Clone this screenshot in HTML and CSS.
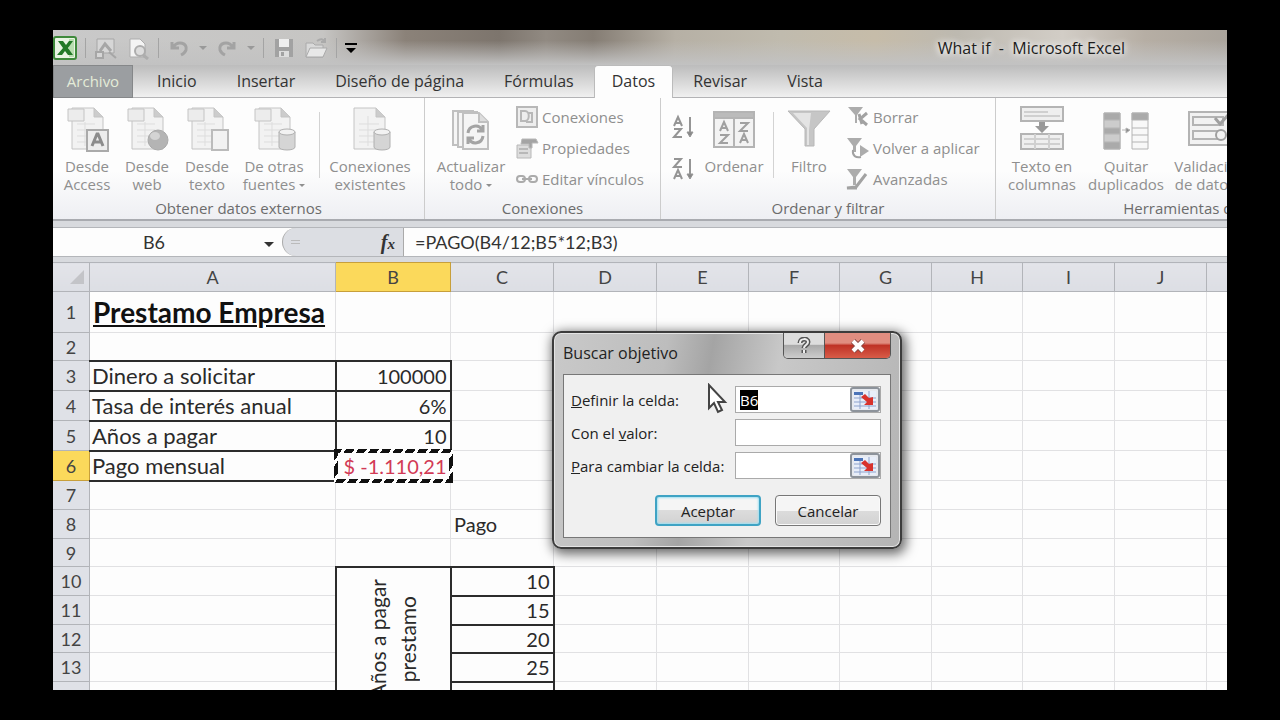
FILE: index.html
```
<!DOCTYPE html>
<html lang="es">
<head>
    <meta charset="utf-8">
    <title>What if - Microsoft Excel</title>
    <link rel="stylesheet" href="styles.css">
</head>
<body>
    <div class="excel">
        <header class="titlebar">
            <div class="quick">
                <svg class="logo" width="24" height="24" viewBox="0 0 24 24"><rect x="1" y="1" width="22" height="22" rx="2" fill="#e9f5e4" stroke="#3f8a3c" stroke-width="2"/><path d="M16 3h5v18h-5z" fill="#b9deb0"/><path d="M5 5h5l3 4 3-4h4l-5 7 5 7h-5l-3-4-3 4H4l6-7z" fill="#237a28"/></svg>
                <i class="bar"></i>
                <button title="Guardar imagen"><svg width="24" height="24" viewBox="0 0 24 24" fill="#d6d6d6" stroke="#a6a6a6"><path d="M3 3h17v14H3z"/><path d="M6 15l5-7 6 7" fill="none" stroke-width="3"/><path d="M2 16h7v6H2zM15 16l7 6" stroke-width="2"/></svg></button>
                <button title="Vista preliminar"><svg width="24" height="24" viewBox="0 0 24 24" fill="#f4f4f4" stroke="#adadad"><path d="M4 3h10l5 5v13H4z"/><circle cx="14" cy="15" r="5" fill="#ddd" stroke-width="2"/><path d="M17 19l5 4" stroke-width="3"/></svg></button>
                <i class="bar"></i>
                <button title="Deshacer"><svg width="24" height="24" viewBox="0 0 24 24" fill="none" stroke="#a3a3a3" stroke-width="3"><path d="M5 6v6h7M6 11c5-7 15-4 13 3-1 3-3 4-5 5"/></svg></button>
                <span class="caret"></span>
                <button title="Rehacer"><svg width="24" height="24" viewBox="0 0 24 24" fill="none" stroke="#a3a3a3" stroke-width="3"><path d="M19 6v6h-7M18 11C13 4 3 7 5 14c1 3 3 4 5 5"/></svg></button>
                <span class="caret"></span>
                <i class="bar"></i>
                <button title="Guardar"><svg width="24" height="24" viewBox="0 0 24 24" fill="#a2a2a2"><path d="M3 3h18v18H3z"/><path d="M7 3h10v8H7z" fill="#eee"/><path d="M7 15h10v6H7z" fill="#ddd"/><path d="M9 16h3v4H9z"/></svg></button>
                <button title="Abrir"><svg width="24" height="24" viewBox="0 0 24 24" fill="#d9d9d9" stroke="#aaa"><path d="M2 7h7l2 2h8v12H2z"/><path d="M6 12h17l-4 9H2z" fill="#e8e8e8"/><path d="M13 5c4-3 6-2 8 1m0-4v4h-4" fill="none" stroke-width="2"/></svg></button>
                <i class="bar"></i>
                <button class="more" title="Personalizar"><svg width="12" height="12" viewBox="0 0 12 12"><path d="M0 1h12v2H0zM1 6h10l-5 5z"/></svg></button>
            </div>
            <h1>What if &nbsp;- &nbsp;Microsoft Excel</h1>
        </header>

        <nav class="tabs">
            <a href="#" class="file">Archivo</a>
            <a href="#">Inicio</a>
            <a href="#">Insertar</a>
            <a href="#">Diseño de página</a>
            <a href="#">Fórmulas</a>
            <a href="#" class="active">Datos</a>
            <a href="#">Revisar</a>
            <a href="#">Vista</a>
        </nav>

        <!-- cinta de opciones -->
        <div class="ribbon">
            <section class="group g-get">
                <div class="tools">
                    <button class="big"><svg width="48" height="48" viewBox="0 0 48 48" fill="#f2f2f2" stroke="#c4c4c4"><path d="M9 4h22l9 9v32H9z"/><path d="M31 4v9h9" fill="#ccc"/><path d="M5 5h16v12H5z" fill="#ececec"/><path d="M14 20h18M14 26h18M14 32h18M14 38h18M22 18v24" stroke="#ddd"/><path d="M24 26h21v21H24z" fill="#ededed" stroke="#aaa" stroke-width="2"/><path d="M29 42l5-12h1l5 12M31 38h7" fill="none" stroke="#8c8c8c" stroke-width="3"/></svg>Desde<br>Access</button>
                    <button class="big"><svg width="48" height="48" viewBox="0 0 48 48" fill="#f2f2f2" stroke="#c4c4c4"><path d="M9 4h22l9 9v32H9z"/><path d="M31 4v9h9" fill="#ccc"/><path d="M5 5h16v12H5z" fill="#ececec"/><path d="M14 20h18M14 26h18M14 32h18M14 38h18M22 18v24" stroke="#ddd"/><circle cx="35" cy="36" r="10" fill="#b4b4b4" stroke="#aaa"/><ellipse cx="32" cy="32" rx="5" ry="4" fill="#d4d4d4" stroke="none"/></svg>Desde<br>web</button>
                    <button class="big"><svg width="48" height="48" viewBox="0 0 48 48" fill="#f2f2f2" stroke="#c4c4c4"><path d="M9 4h22l9 9v32H9z"/><path d="M31 4v9h9" fill="#ccc"/><path d="M5 5h16v12H5z" fill="#ececec"/><path d="M14 20h18M14 26h18M14 32h18M14 38h18M22 18v24" stroke="#ddd"/><path d="M29 26h16v20H29z" stroke="#bbb" stroke-width="2"/></svg>Desde<br>texto</button>
                    <button class="big wide"><svg width="48" height="48" viewBox="0 0 48 48" fill="#f2f2f2" stroke="#c4c4c4"><path d="M9 4h22l9 9v32H9z"/><path d="M31 4v9h9" fill="#ccc"/><path d="M5 5h16v12H5z" fill="#ececec"/><path d="M14 20h18M14 26h18M14 32h18M14 38h18M22 18v24" stroke="#ddd"/><path d="M29 28v15c0 4 16 4 16 0V28" fill="#d5d5d5" stroke="#b0b0b0"/><ellipse cx="37" cy="28" rx="8" ry="3" stroke="#b0b0b0"/></svg>De otras<br>fuentes <span class="caret"></span></button>
                    <i class="split"></i>
                    <button class="big wider"><svg width="48" height="48" viewBox="0 0 48 48" fill="#f2f2f2" stroke="#c4c4c4"><path d="M8 4h22l9 9v32H8z"/><path d="M30 4v9h9" fill="#ccc"/><path d="M13 20h20M13 26h20M13 32h20M13 38h20M22 12v30" stroke="#ddd"/><path d="M28 28v15c0 4 16 4 16 0V28" fill="#d5d5d5" stroke="#b0b0b0"/><ellipse cx="36" cy="28" rx="8" ry="3" stroke="#b0b0b0"/></svg>Conexiones<br>existentes</button>
                </div>
                <h2>Obtener datos externos</h2>
            </section>

            <section class="group g-conn">
                <div class="tools">
                    <button class="big wider"><svg width="48" height="48" viewBox="0 0 48 48" fill="#f5f5f5" stroke="#c0c0c0" stroke-width="2"><path d="M6 7h20v34H6z"/><path d="M11 8h19v35H11z"/><path d="M16 9h16l9 9v27H16z"/><path d="M32 9v9h9" fill="#ddd"/><path d="M21 29c1-8 11-9 14-3m1-5v6h-6M36 32c-1 8-11 9-14 3m-1 5v-6h6" fill="none" stroke="#a4a4a4" stroke-width="3"/></svg>Actualizar<br>todo <span class="caret"></span></button>
                    <div class="list">
                        <button><svg width="24" height="24" viewBox="0 0 24 24" fill="#eee" stroke="#b8b8b8" stroke-width="2"><path d="M2 2h20v20H2z"/><path d="M6 6h4c5 0 5 10 0 10H6zM13 8h4v9h-6" fill="none"/></svg>Conexiones</button>
                        <button><svg width="24" height="24" viewBox="0 0 24 24" fill="#ddd" stroke="#b8b8b8"><path d="M2 9h14v13H2z"/><path d="M7 3h14l2 4h-6v5h-3V8H6z" fill="#a4a4a4"/><path d="M4 13h9M4 17h9" stroke-width="2"/></svg>Propiedades</button>
                        <button><svg width="24" height="24" viewBox="0 0 24 24" fill="none" stroke="#ababab" stroke-width="2"><rect x="2" y="9" width="8" height="6" rx="3"/><rect x="14" y="9" width="8" height="6" rx="3"/><path d="M7 12h10"/></svg>Editar vínculos</button>
                    </div>
                </div>
                <h2>Conexiones</h2>
            </section>

            <section class="group g-sort">
                <div class="tools">
                    <div class="sorts">
                        <button title="Ordenar de A a Z"><svg width="24" height="26" viewBox="0 0 24 26" fill="none" stroke="#959595" stroke-width="2"><path d="M3 12l4-9 4 9M4 9h6M3 15h7l-7 8h8M19 3v17"/><path d="M16 18h6l-3 5z" fill="#888" stroke-width="1"/></svg></button>
                        <button title="Ordenar de Z a A"><svg width="24" height="26" viewBox="0 0 24 26" fill="none" stroke="#959595" stroke-width="2"><path d="M3 3h7l-7 8h8M3 23l4-9 4 9M4 20h6M19 3v17"/><path d="M16 18h6l-3 5z" fill="#888" stroke-width="1"/></svg></button>
                    </div>
                    <button class="big sort"><svg width="48" height="48" viewBox="0 0 48 48" fill="#f3f3f3" stroke="#b4b4b4" stroke-width="2"><path d="M4 8h40v35H4z"/><path d="M4 8h40v6H4z" fill="#bbb"/><path d="M24 14v29"/><path d="M10 27l4-9 4 9M11 24h6M10 31h8l-8 8h8M30 19h8l-8 8h8M30 39l4-9 4 9M31 36h6" fill="none" stroke="#a0a0a0"/></svg>Ordenar</button>
                    <i class="split"></i>
                    <button class="big filter"><svg width="48" height="48" viewBox="0 0 48 48"><path d="M3 7h42L29 25v17h-9V25z" fill="#c6c6c6" stroke="#b8b8b8"/><path d="M8 9h18l-2 17v15h-2V24z" fill="#e4e4e4"/></svg>Filtro</button>
                    <div class="list">
                        <button><svg width="24" height="24" viewBox="0 0 24 24" fill="#acacac"><path d="M2 2h15l-6 8v8H9v-8z"/><path d="M21 8l-7 6 7 6M13 9l3 10" fill="none" stroke="#a2a2a2" stroke-width="3"/></svg>Borrar</button>
                        <button><svg width="24" height="24" viewBox="0 0 24 24" fill="#acacac"><path d="M1 2h15l-6 8v6H7v-6z"/><path d="M7 14c-1 6 3 8 8 7" fill="none" stroke="#a2a2a2" stroke-width="2"/><path d="M14 9l9 6-9 6z"/></svg>Volver a aplicar</button>
                        <button><svg width="24" height="24" viewBox="0 0 24 24" fill="#acacac"><path d="M1 2h15l-6 8v8H7v-8z"/><path d="M20 7L10 20l-9 1h10" fill="none" stroke="#a2a2a2" stroke-width="3"/></svg>Avanzadas</button>
                    </div>
                </div>
                <h2>Ordenar y filtrar</h2>
            </section>

            <section class="group g-data">
                <div class="tools">
                    <button class="big wider"><svg width="48" height="48" viewBox="0 0 48 48" fill="#efefef" stroke="#b4b4b4" stroke-width="2"><path d="M3 3h42v14H3zM3 30h42v15H3z"/><path d="M6 8h24M6 12h36M17 30v15M31 30v15M6 35h36M6 40h36" stroke="#d0d0d0"/><path d="M21 18h6v4h4l-7 7-7-7h4z" fill="#999" stroke="none"/></svg>Texto en<br>columnas</button>
                    <button class="big wider"><svg width="48" height="48" viewBox="0 0 48 48" fill="#f8f8f8" stroke="#b4b4b4"><path d="M2 9h16v36H2zM30 9h16v36H30z"/><path d="M2 9h16v7H2zM2 24h16v6H2zM2 38h16v7H2zM30 9h16v7H30z" fill="#aaa"/><path d="M2 16h16v8H2zM2 30h16v8H2z" fill="#ccc"/><path d="M30 24h16M30 31h16M30 38h16M20 26h5"/><path d="M24 24l4 2-4 3z" fill="#888"/></svg>Quitar<br>duplicados</button>
                    <button class="big wider"><svg width="48" height="48" viewBox="0 0 48 48" fill="#f2f2f2" stroke="#b4b4b4" stroke-width="2"><path d="M3 8h44v33H3z"/><path d="M7 13h30v8H7zM7 27h30v8H7z"/><path d="M29 14l5 6 9-10" fill="none" stroke="#a0a0a0" stroke-width="3"/><circle cx="35" cy="31" r="5" stroke="#a0a0a0"/></svg>Validación<br>de datos <span class="caret"></span></button>
                </div>
                <h2>Herramientas de datos</h2>
            </section>
        </div>

        <div class="formulabar">
            <div class="namebox">
                <input type="text" value="B6" aria-label="Cuadro de nombres">
                <button title="Nombres"><span class="caret"></span></button>
            </div>
            <div class="fxbox">
                <span class="grip"></span>
                <button class="fx" title="Insertar función">f<small>x</small></button>
            </div>
            <input class="formula" type="text" value="=PAGO(B4/12;B5*12;B3)" aria-label="Barra de fórmulas">
        </div>

        <table class="sheet">
            <colgroup>
                <col class="c-num"><col class="c-a"><col class="c-b"><col class="c-c"><col class="c-c">
                <col class="c-e"><col class="c-f"><col class="c-e"><col class="c-f"><col class="c-e"><col class="c-e"><col class="c-e">
            </colgroup>
            <thead>
                <tr>
                    <th class="corner"><svg width="16" height="16" viewBox="0 0 16 16"><path d="M15 1v14H1z" fill="#c3c4c8"/></svg></th>
                    <th>A</th><th class="sel">B</th><th>C</th><th>D</th><th>E</th><th>F</th><th>G</th><th>H</th><th>I</th><th>J</th><th></th>
                </tr>
            </thead>
            <tbody>
                <tr class="tall"><th>1</th><td class="title">Prestamo Empresa</td><td></td><td></td><td></td><td></td><td></td><td></td><td></td><td></td><td></td><td></td></tr>
                <tr class="short"><th>2</th><td></td><td></td><td></td><td></td><td></td><td></td><td></td><td></td><td></td><td></td><td></td></tr>
                <tr class="data"><th>3</th><td class="box name">Dinero a solicitar</td><td class="box num">100000</td><td></td><td></td><td></td><td></td><td></td><td></td><td></td><td></td><td></td></tr>
                <tr class="data"><th>4</th><td class="box name">Tasa de interés anual</td><td class="box num">6%</td><td></td><td></td><td></td><td></td><td></td><td></td><td></td><td></td><td></td></tr>
                <tr class="data"><th>5</th><td class="box name">Años a pagar</td><td class="box num">10</td><td></td><td></td><td></td><td></td><td></td><td></td><td></td><td></td><td></td></tr>
                <tr class="data"><th class="sel">6</th><td class="box name">Pago mensual</td><td class="box num current"><span class="marquee"></span><span class="value">$ -1.110,21</span></td><td></td><td></td><td></td><td></td><td></td><td></td><td></td><td></td><td></td></tr>
                <tr><th>7</th><td></td><td></td><td></td><td></td><td></td><td></td><td></td><td></td><td></td><td></td><td></td></tr>
                <tr><th>8</th><td></td><td></td><td>Pago</td><td></td><td></td><td></td><td></td><td></td><td></td><td></td><td></td></tr>
                <tr class="short"><th>9</th><td></td><td></td><td></td><td></td><td></td><td></td><td></td><td></td><td></td><td></td><td></td></tr>
                <tr><th>10</th><td></td><td class="box turned" rowspan="5"><span>Años a pagar<br>prestamo</span></td><td class="box num">10</td><td></td><td></td><td></td><td></td><td></td><td></td><td></td><td></td></tr>
                <tr><th>11</th><td></td><td class="box num">15</td><td></td><td></td><td></td><td></td><td></td><td></td><td></td><td></td></tr>
                <tr class="short"><th>12</th><td></td><td class="box num">20</td><td></td><td></td><td></td><td></td><td></td><td></td><td></td><td></td></tr>
                <tr><th>13</th><td></td><td class="box num">25</td><td></td><td></td><td></td><td></td><td></td><td></td><td></td><td></td></tr>
                <tr><th>14</th><td></td><td class="box num">30</td><td></td><td></td><td></td><td></td><td></td><td></td><td></td><td></td></tr>
            </tbody>
        </table>

        <form class="dialog">
            <div class="caption">
                <h3>Buscar objetivo</h3>
                <div class="winbtns">
                    <button type="button" class="help" title="Ayuda"><svg width="16" height="18" viewBox="0 0 16 18" fill="none"><path d="M4 6c0-5 8-5 8-1 0 3-4 3-4 6M8 13v3" stroke="#555" stroke-width="5"/><path d="M4 6c0-5 8-5 8-1 0 3-4 3-4 6M8 13v3" stroke="#eee" stroke-width="2"/></svg></button>
                    <button type="button" class="close" title="Cerrar"><svg width="16" height="14" viewBox="0 0 16 14"><path d="M3 2l10 10M13 2L3 12" stroke="#8a4a44" stroke-width="6"/><path d="M3 2l10 10M13 2L3 12" stroke="#fff" stroke-width="4"/></svg></button>
                </div>
            </div>
            <div class="panel">
                <div class="row">
                    <label for="celda"><u>D</u>efinir la celda:</label>
                    <div class="field">
                        <input type="text" id="celda" value="B6">
                        <button type="button" title="Contraer"><svg width="22" height="18" viewBox="0 0 22 18"><path d="M0 0h22v18H0z" fill="#e8eefa"/><path d="M0 1h9v3H0z" fill="#4b74b8"/><path d="M0 7h22M0 11h22M0 15h22M6 4v14M15 0v18" stroke="#8ea3cc"/><path d="M7 6l4-3 4 4 4-1v8h-9l3-3z" fill="#d8322c"/></svg></button>
                    </div>
                </div>
                <div class="row">
                    <label for="valor">Con el <u>v</u>alor:</label>
                    <div class="field"><input type="text" id="valor"></div>
                </div>
                <div class="row">
                    <label for="cambiar"><u>P</u>ara cambiar la celda:</label>
                    <div class="field">
                        <input type="text" id="cambiar">
                        <button type="button" title="Contraer"><svg width="22" height="18" viewBox="0 0 22 18"><path d="M0 0h22v18H0z" fill="#e8eefa"/><path d="M0 1h9v3H0z" fill="#4b74b8"/><path d="M0 7h22M0 11h22M0 15h22M6 4v14M15 0v18" stroke="#8ea3cc"/><path d="M7 6l4-3 4 4 4-1v8h-9l3-3z" fill="#d8322c"/></svg></button>
                    </div>
                </div>
                <div class="actions">
                    <button type="button" class="ok">Aceptar</button>
                    <button type="button">Cancelar</button>
                </div>
            </div>
        </form>

        <svg class="pointer" width="22" height="32" viewBox="0 0 22 32"><path d="M2 2v23l5-5 4 9 4-2-4-8h7z" fill="#fff" stroke="#444" stroke-width="2"/></svg>
    </div>

    <script>
        // la celda objetivo aparece seleccionada al abrir el cuadro
        document.getElementById('celda').select();
    </script>
</body>
</html>
```
FILE: styles.css
```
* { box-sizing: border-box; }
body {
    margin: 0;
    padding: 30px 53px;
    height: 100vh;
    background: #000;
    font-family: "Open Sans", "Noto Sans", sans-serif;
    font-size: 15px;
    color: #444;
}
button { padding: 0; border: 0; background: none; font: inherit; color: inherit; }
input { font: inherit; color: inherit; outline: none; }
h1, h2, h3 { margin: 0; font-weight: normal; }
svg { display: block; }
.excel {
    position: relative;
    display: flex;
    flex-direction: column;
    height: 100%;
    overflow: hidden;
    background: #d8dade;
}
.excel > * { flex-shrink: 0; }
.caret {
    display: inline-block;
    border: 4px solid transparent;
    border-top-color: currentColor;
    border-bottom: 0;
    vertical-align: middle;
}

/* barra de título */
.titlebar {
    display: flex;
    align-items: center;
    justify-content: space-between;
    height: 35px;
    padding-right: 102px;
    background:
        linear-gradient(rgba(190,190,190,0) 30%, #c2c2c2),
        linear-gradient(90deg, #c9c9c9 0, #c6c5c3 23%, #8b8279 30%, #7d756d 38%, #918a82 42%, #857d74 46%, #b6b0a5 53%, #c0bbae 62%, #c6bca9 70%, #bdb9b0 77%, #d2cdc6 86%, #b6aea4 93%, #aaa49c 100%);
}
.quick { display: flex; align-items: center; gap: 8px; color: #999; }
.quick .bar { width: 1px; height: 20px; background: #a4a4a4; }
.quick .more { color: #000; }
.titlebar h1 {
    font-size: 16px;
    color: #1c1c1c;
    text-shadow: 0 0 6px #fff, 0 0 10px #fff;
}

/* pestañas */
.tabs {
    display: flex;
    height: 33px;
    background: linear-gradient(#bcbcbc, #f0f0f0);
    border-bottom: 1px solid #b3b3b5;
    font-size: 16px;
}
.tabs a {
    height: 33px;
    padding: 0 20px;
    line-height: 33px;
    color: #333;
    text-decoration: none;
}
.tabs .file {
    width: 80px;
    margin-right: 4px;
    padding: 0;
    background: #9b9ea1;
    border: 1px solid #858789;
    color: #e4ecd8;
    font-size: 15px;
    line-height: 31px;
    text-align: center;
}
.tabs .active {
    padding: 0 17px;
    background: #fdfdfd;
    border: 1px solid #bbb;
    border-bottom: 0;
    border-radius: 4px 4px 0 0;
    line-height: 31px;
}

/* cinta */
.ribbon {
    display: flex;
    height: 123px;
    background: linear-gradient(#fdfdfd 60%, #eeeff3);
    border-bottom: 2px solid #a9abb0;
    color: #8f8f8f;
}
.group {
    display: flex;
    flex-direction: column;
    flex-shrink: 0;
    justify-content: space-between;
    border-right: 1px solid #ccc;
}
.g-get { width: 372px; }
.g-conn { width: 236px; }
.g-sort { width: 335px; }
.g-data { width: 416px; }
.tools { display: flex; padding: 6px 4px 0; }
.group h2 {
    font-size: 15px;
    line-height: 22px;
    text-align: center;
    color: #6c6c6c;
}
.big {
    display: block;
    width: 60px;
    line-height: 18px;
    white-space: nowrap;
    align-self: flex-start;
}
.big svg { margin: 0 auto 5px; }
.big .caret { border-width: 3px 3px 0; }
.big.wide { width: 74px; }
.big.sort { width: 78px; }
.big.filter { width: 70px; }
.big.wider { width: 84px; }
.split { width: 1px; height: 66px; margin: 8px 8px 0; background: #d3d3d3; }
.g-sort .split { margin: 8px 0 0; }
.list { display: flex; flex-direction: column; gap: 7px; padding: 1px 0 0 2px; }
.list button { display: flex; align-items: center; gap: 3px; height: 24px; white-space: nowrap; }
.sorts { display: flex; flex-direction: column; gap: 16px; padding: 10px 0 0 6px; }

/* barra de fórmulas */
.formulabar {
    display: flex;
    height: 30px;
    margin: 6px 0;
    background: #fdfdfd;
    border: solid #b4b6ba;
    border-width: 1px 0;
    font-family: Lato, sans-serif;
    font-size: 18px;
    color: #333;
}
.formulabar input { border: 0; background: none; padding: 0; }
.namebox { display: flex; width: 229px; }
.namebox input { flex: 1; min-width: 0; text-align: center; }
.namebox button { width: 27px; }
.namebox .caret { border-width: 5px 5px 0; }
.fxbox {
    display: flex;
    align-items: center;
    justify-content: space-between;
    width: 122px;
    padding: 0 8px;
    background: #dcdee3;
    border: 1px solid #aaa;
    border-width: 0 1px;
    border-radius: 14px 0 0 14px;
}
.grip { width: 9px; height: 4px; border: solid #bbb; border-width: 1px 0; }
.fx { font: italic bold 20px "Liberation Serif", serif; }
.fx small { font-size: 15px; }
.formulabar .formula { flex: 1; padding-left: 11px; }

/* hoja */
.sheet {
    table-layout: fixed;
    width: 1244px;
    margin: -1px 0 0 -1px;
    border-collapse: collapse;
    background: #fdfdfd;
    font-family: Lato, sans-serif;
    font-size: 20px;
    color: #2a2a2a;
}
.c-num { width: 37px; }
.c-a { width: 246px; }
.c-b { width: 115px; }
.c-c { width: 103px; }
.c-e { width: 92px; }
.c-f { width: 91px; }
.sheet tr { height: 29px; }
.sheet .short { height: 28px; }
.sheet .data { height: 30px; }
.sheet .tall { height: 41px; }
.sheet th {
    padding: 0;
    background: #dfe1e7;
    border: 1px solid #b2b4b9;
    font-size: 18px;
    font-weight: normal;
    line-height: 22px;
    color: #444;
}
.sheet thead th { background: linear-gradient(#e3e4e9, #dcdee4); }
.sheet th.sel, .sheet thead th.sel { background: #fbd95b; border-color: #c79f3b; }
.corner svg { margin: 0 4px 0 auto; }
.sheet td {
    padding: 0 3px;
    border: 1px solid #e1e1e3;
    line-height: 24px;
    white-space: nowrap;
}
.sheet .box { border: 2px solid #2c2c2c; }
.sheet .name { padding-left: 2px; border-left-width: 1px; font-size: 22px; }
.sheet .num { text-align: right; }
.sheet .title { font-size: 28px; font-weight: bold; text-decoration: underline; color: #111; }
.current { position: relative; color: #d23a55; }
.value { position: relative; }
.marquee {
    position: absolute;
    inset: -3px;
    border: 4px solid transparent;
    background:
        linear-gradient(#fdfdfd, #fdfdfd) padding-box,
        repeating-linear-gradient(-55deg, #111 0 7px, #fff 7px 10px) border-box;
}
.turned { text-align: center; font-size: 21px; }
.turned span {
    display: inline-block;
    writing-mode: vertical-rl;
    transform: rotate(180deg);
    line-height: 30px;
    vertical-align: middle;
}

/* cuadro Buscar objetivo */
.dialog {
    position: absolute;
    left: 499px;
    top: 301px;
    width: 350px;
    padding: 0 9px 9px;
    border: 2px solid #3c3c3c;
    border-radius: 9px;
    background: linear-gradient(100deg, #c9c9c9, #bdbdbd 30%, #a4a4a4 42%, #c8c8c8 60%, #b4b4b4);
    box-shadow: inset 0 0 0 1px #e4e4e4, 2px 3px 12px 2px rgba(0,0,0,.6);
    font-size: 15px;
    color: #222;
}
.caption { display: flex; justify-content: space-between; height: 41px; }
.caption h3 { font-size: 16px; line-height: 40px; }
.winbtns { display: flex; height: 26px; border: 1px solid #555; border-top: 0; border-radius: 0 0 5px 5px; overflow: hidden; }
.winbtns button { display: flex; align-items: center; justify-content: center; }
.winbtns .help { width: 40px; background: linear-gradient(#ddd 45%, #aaa 50%, #ccc); }
.winbtns .close { width: 66px; border-left: 1px solid #555; background: linear-gradient(#e08d80 40%, #bf3226 50%, #d85c48); }
.panel { padding: 11px 9px 11px 7px; border: 1px solid #777; background: #f0f0f0; }
.row { display: flex; justify-content: space-between; align-items: center; margin-bottom: 6px; }
.row label { line-height: 26px; }
.field { display: flex; width: 146px; height: 27px; border: 1px solid #aaa; background: #fff; }
.field input { flex: 1; min-width: 0; border: 0; padding: 0 4px; background: none; }
.field input::selection { background: #000; color: #fff; }
.field button { display: flex; align-items: center; justify-content: center; width: 30px; border: 2px solid #8d939b; border-radius: 3px; background: #e6e9ef; }
.actions { display: flex; justify-content: flex-end; gap: 14px; margin-top: 16px; }
.actions button {
    width: 106px;
    height: 31px;
    border: 1px solid #777;
    border-radius: 4px;
    background: linear-gradient(#f5f5f5 50%, #dcdcdc 50%, #d2d2d2);
    box-shadow: inset 0 0 0 1px #fafafa;
}
.actions .ok { border: 2px solid #3fa3c4; box-shadow: inset 0 0 2px 1px #9fe0f2; }
.pointer { position: absolute; left: 654px; top: 353px; }
```
